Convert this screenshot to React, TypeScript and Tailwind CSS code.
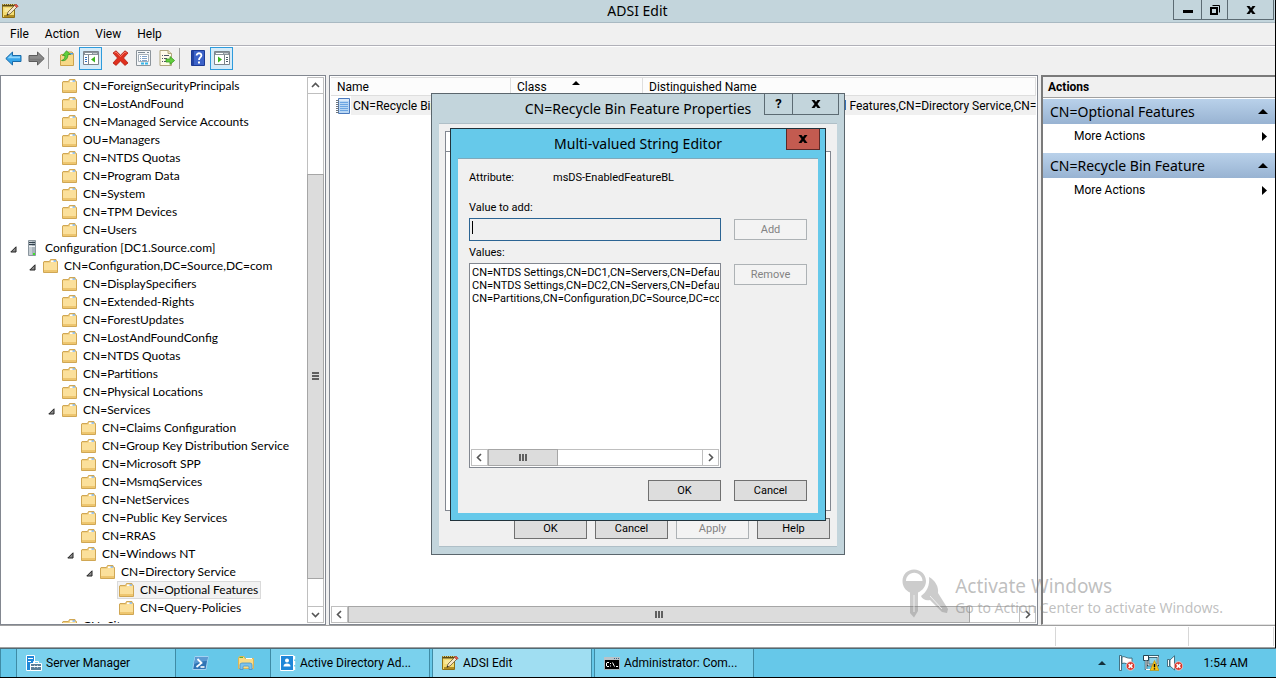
import React from 'react';

interface TreeNode {
  name: string;
  level: number;
  icon?: 'folder' | 'server';
  open?: boolean;
  selected?: boolean;
}

const TREE: TreeNode[] = [
  { name: 'CN=ForeignSecurityPrincipals', level: 2 },
  { name: 'CN=LostAndFound', level: 2 },
  { name: 'CN=Managed Service Accounts', level: 2 },
  { name: 'OU=Managers', level: 2 },
  { name: 'CN=NTDS Quotas', level: 2 },
  { name: 'CN=Program Data', level: 2 },
  { name: 'CN=System', level: 2 },
  { name: 'CN=TPM Devices', level: 2 },
  { name: 'CN=Users', level: 2 },
  { name: 'Configuration [DC1.Source.com]', level: 0, icon: 'server', open: true },
  { name: 'CN=Configuration,DC=Source,DC=com', level: 1, open: true },
  { name: 'CN=DisplaySpecifiers', level: 2 },
  { name: 'CN=Extended-Rights', level: 2 },
  { name: 'CN=ForestUpdates', level: 2 },
  { name: 'CN=LostAndFoundConfig', level: 2 },
  { name: 'CN=NTDS Quotas', level: 2 },
  { name: 'CN=Partitions', level: 2 },
  { name: 'CN=Physical Locations', level: 2 },
  { name: 'CN=Services', level: 2, open: true },
  { name: 'CN=Claims Configuration', level: 3 },
  { name: 'CN=Group Key Distribution Service', level: 3 },
  { name: 'CN=Microsoft SPP', level: 3 },
  { name: 'CN=MsmqServices', level: 3 },
  { name: 'CN=NetServices', level: 3 },
  { name: 'CN=Public Key Services', level: 3 },
  { name: 'CN=RRAS', level: 3 },
  { name: 'CN=Windows NT', level: 3, open: true },
  { name: 'CN=Directory Service', level: 4, open: true },
  { name: 'CN=Optional Features', level: 5, selected: true },
  { name: 'CN=Query-Policies', level: 5 },
  { name: 'CN=Sites', level: 2 },
];

const INDENT = ['pl-[4px]', 'pl-[23px]', 'pl-[42px]', 'pl-[61px]', 'pl-[80px]', 'pl-[99px]'];

const VALUES = [
  'CN=NTDS Settings,CN=DC1,CN=Servers,CN=Default-First-Site-Name',
  'CN=NTDS Settings,CN=DC2,CN=Servers,CN=Default-First-Site-Name',
  'CN=Partitions,CN=Configuration,DC=Source,DC=com',
];

/* ---------- icons ---------- */

const FolderIcon = () => (
  <svg width="15" height="14" viewBox="0 0 15 14" className="shrink-0">
    <path d="M0.5 3V13.5H14.5V2.5L13 1.5V0.5H7.5L6.5 2.5H1Z" fill="#f3d283" stroke="#d0a754" />
    <path d="M8 1.5H13V3H8Z" fill="#fff" />
    <path d="M10.5 1.5H13V2.5H10.5Z" fill="#3b8de0" />
    <path d="M1 4H7L8 3H14V12.5H1Z" fill="#fbe09b" />
    <path d="M1 11H14V13H1Z" fill="#eec66f" />
  </svg>
);

const ServerIcon = () => (
  <svg width="15" height="16" viewBox="0 0 15 16" className="shrink-0">
    <path d="M4.5 0.5H11.5V15.5H4.5Z" fill="#a9b4bc" stroke="#8b969e" />
    <path d="M5 1H8V15H5Z" fill="#c6ced4" />
    <path d="M5 2.5H11M5 4.5H11" stroke="#33424d" />
    <path d="M5 6.5H11" stroke="#eef2f4" />
    <path d="M9 13H11V15H9Z" fill="#3fe22b" />
  </svg>
);

const Expander = () => (
  <svg width="7" height="7" viewBox="0 0 7 7">
    <path d="M6 0.8V6H0.8Z" fill="#8a8a8a" stroke="#222" strokeWidth="1" />
  </svg>
);

const NotepadIcon = () => (
  <svg width="17" height="16" viewBox="0 0 17 16" className="shrink-0">
    <path d="M0.5 1.5H12.5V14.5H0.5Z" fill="#f3dc72" stroke="#8d6f14" />
    <path d="M0.5 1.5H12.5V3.5H0.5Z" fill="#5b4a14" />
    <path d="M1 1.5H12" stroke="#d9c878" strokeDasharray="1 1" />
    <path d="M2 12H12V14H2Z" fill="#b38f23" />
    <path d="M2.5 6H9M2.5 8H7" stroke="#fff6c4" />
    <path d="M5 12L6 9L13 2L15 4L8 11Z" fill="#f6e7c8" stroke="#6b5a33" strokeWidth="0.8" />
    <path d="M12.5 2.5L14 1L16.2 3.2L14.8 4.6Z" fill="#e2574a" stroke="#a43429" strokeWidth="0.6" />
    <path d="M4.6 12.6L5.4 10.8L6.6 12Z" fill="#222" />
  </svg>
);

const ArrowIcon = ({ flip = false }: { flip?: boolean }) => (
  <svg width="17" height="15" viewBox="0 0 17 15" className={flip ? 'rotate-180' : ''}>
    <path
      d="M0.8 7.5L7.5 1V4.5H16V10.5H7.5V14Z"
      fill={flip ? '#8b8b8b' : '#35a5ea'}
      stroke={flip ? '#5c5c5c' : '#1b6aa8'}
    />
    <path d="M2.5 7.2L6.6 3.2V5.6H15V7.2Z" fill={flip ? '#7a7a7a' : '#8fd4fa'} />
  </svg>
);

const FolderUpIcon = () => (
  <svg width="16" height="16" viewBox="0 0 16 16">
    <path d="M1.5 5V15.5H14.5V3.5L13 2H8.5L7.5 4.5H2Z" fill="#f7d888" stroke="#cda24d" />
    <path d="M11 3H14V4.5H11Z" fill="#4b9be6" />
    <path d="M2.5 10.5C5 10 6 8 6 5.5H3.5L7.5 0.8L11.5 4.5H9C9 8.5 6.5 11.5 2.5 10.5Z" fill="#5fd03c" stroke="#2f8f1d" strokeWidth="0.7" />
  </svg>
);

const PaneIcon = ({ right = false }: { right?: boolean }) => (
  <svg width="16" height="14" viewBox="0 0 16 14">
    <path d="M0.5 0.5H15.5V13.5H0.5Z" fill="#fff" stroke="#7d858c" />
    <path d="M1 1H15V4H1Z" fill="#8a939b" />
    <path d="M2 2.5H9" stroke="#fff" />
    <path d="M10.5 2.5H11.5M12.5 2.5H13.5" stroke="#fff" />
    {right ? (
      <>
        <path d="M10.5 4V13" stroke="#7d858c" />
        <path d="M12 6.5H14M12 8.5H14M12 10.5H14" stroke="#4a5a68" />
        <path d="M4 5.5L8 8.5L4 11.5Z" fill="#3db51d" />
      </>
    ) : (
      <>
        <path d="M5.5 4V13" stroke="#7d858c" />
        <path d="M2 6.5H4M2 8.5H4M2 10.5H4" stroke="#2f6fc0" />
        <path d="M12 5.5L8 8.5L12 11.5Z" fill="#3db51d" />
      </>
    )}
  </svg>
);

const DeleteIcon = () => (
  <svg width="17" height="16" viewBox="0 0 17 16">
    <path
      d="M1 3L4 0.8L8.5 5.2L13 0.8L16 3L11.5 8L16 13L13 15.4L8.5 11L4 15.4L1 13L5.5 8Z"
      fill="#e0301e"
      stroke="#b01e12"
      strokeWidth="0.8"
    />
    <path d="M2.5 3L4 2L8.5 6.6L13 2L14.5 3" fill="none" stroke="#f47c6e" />
  </svg>
);

const PropertiesIcon = () => (
  <svg width="15" height="16" viewBox="0 0 15 16">
    <path d="M0.5 0.5H14.5V15.5H0.5Z" fill="#f4f6f8" stroke="#8c949b" />
    <path d="M2 2.5H9M11 2.5H13" stroke="#7c8994" />
    <path d="M2.5 4.5H12.5V11.5H2.5Z" fill="#fff" stroke="#a5afb8" />
    <path d="M4 6.5H5M6 6.5H11M4 8.5H5M6 8.5H11M4 10.5H5M6 10.5H11" stroke="#7fa3cb" />
    <path d="M5 13.5H8M9 13.5H12" stroke="#34b6ea" strokeWidth="2" />
  </svg>
);

const ExportIcon = () => (
  <svg width="16" height="16" viewBox="0 0 16 16">
    <path d="M1 0.5H9L12.5 3.5V15.5H1Z" fill="#fffbe9" stroke="#b0a67e" />
    <path d="M9 0.5V3.5H12.5" fill="#e9dfbb" stroke="#b0a67e" />
    <path d="M3 5.5H4M5 5.5H10M3 8.5H4M5 8.5H8M3 11.5H4M5 11.5H8" stroke="#4d5566" />
    <path d="M7 9H11V6.5L15.6 10.5L11 14.5V12H7Z" fill="#62cf3e" stroke="#3b9a22" strokeWidth="0.8" />
  </svg>
);

const HelpIcon = () => (
  <svg width="14" height="16" viewBox="0 0 14 16">
    <path d="M0.5 0.5H13.5V15.5H0.5Z" fill="#3c62c8" stroke="#1d3a94" />
    <path d="M1 1H3V15H1Z" fill="#2343a3" />
    <path d="M5.6 5.6C5.6 2.4 10.4 2.6 10.4 5.4C10.4 7.4 8 7.4 8 10" fill="none" stroke="#fff" strokeWidth="1.8" />
    <path d="M7 11.4H9V13.4H7Z" fill="#fff" />
  </svg>
);

const BookIcon = () => (
  <svg width="14" height="16" viewBox="0 0 14 16" className="shrink-0">
    <path d="M2.5 0.5H13.5V15.5H2.5Z" fill="#b9d7f4" stroke="#4a79bd" />
    <path d="M3 1H13V3H3Z" fill="#dbeafa" />
    <path d="M4 4.5H12M4 6.5H12M4 8.5H12M4 10.5H12M4 12.5H12" stroke="#6ba5e2" />
    <path d="M0 2.5H3M0 4.5H3M0 6.5H3M0 8.5H3M0 10.5H3M0 12.5H3M0 14.5H3" stroke="#6d7680" />
  </svg>
);

const Chevron = ({ dir }: { dir: 'up' | 'down' | 'left' | 'right' }) => {
  const d = {
    up: 'M1 6L4.5 2.5L8 6',
    down: 'M1 3L4.5 6.5L8 3',
    left: 'M6 1L2.5 4.5L6 8',
    right: 'M3 1L6.5 4.5L3 8',
  }[dir];
  return (
    <svg width="9" height="9" viewBox="0 0 9 9">
      <path d={d} fill="none" stroke="#555" strokeWidth="1.6" />
    </svg>
  );
};

const CloseGlyph = () => (
  <svg width="10" height="8" viewBox="0 0 10 8">
    <path d="M0.5 0H3.5L5 2L6.5 0H9.5L6.5 4L9.5 8H6.5L5 6L3.5 8H0.5L3.5 4Z" fill="#000" />
  </svg>
);

/* ---------- shared controls ---------- */

const arrowBtn = 'flex items-center justify-center shrink-0 bg-white border border-[#bfbfbf]';

const HScroll = ({ thumb, rest }: { thumb: string; rest: string }) => (
  <div className="flex h-[17px] shrink-0 bg-white">
    <button className={`${arrowBtn} w-[17px]`} aria-label="Scroll left"><Chevron dir="left" /></button>
    <div className={`${thumb} flex items-center justify-center gap-px bg-[#dcdcdc] border border-[#a6a6a6]`}>
      <span className="w-[2px] h-[7px] bg-[#606060]" />
      <span className="w-[2px] h-[7px] bg-[#606060]" />
      <span className="w-[2px] h-[7px] bg-[#606060]" />
    </div>
    <div className={`${rest} border-y border-[#bfbfbf]`} />
    <button className={`${arrowBtn} w-[17px]`} aria-label="Scroll right"><Chevron dir="right" /></button>
  </div>
);

const DialogButton = ({ label, disabled }: { label: string; disabled?: boolean }) => (
  <button
    disabled={disabled}
    className="w-[73px] h-[21px] text-center bg-[#dddddd] border border-[#707070] text-black disabled:bg-[#f3f3f3] disabled:border-[#adb2b5] disabled:text-[#838383]"
  >
    {label}
  </button>
);

/* ---------- window parts ---------- */

const TitleBar = () => (
  <header className="relative flex h-[23px] shrink-0 items-center justify-center bg-[#c3d5dc] border-b border-[#a9b9c2]">
    <div className="absolute left-[2px] top-[3px]"><NotepadIcon /></div>
    <h1 className="font-['Noto_Sans',sans-serif] text-[14px]">ADSI Edit</h1>
    <div className="absolute right-px top-0 flex h-[20px] border-x border-b border-[#5c6b73] divide-x divide-[#5c6b73]">
      <button className="flex w-[28px] items-center justify-center" aria-label="Minimize">
        <span className="mt-1 h-[3px] w-[10px] bg-black" />
      </button>
      <button className="flex w-[26px] items-center justify-center" aria-label="Restore">
        <svg width="10" height="10" viewBox="0 0 10 10">
          <path d="M1 3H7V9H1Z" fill="none" stroke="#000" strokeWidth="2" />
          <path d="M2.5 0.5H9.5V7.5" fill="none" stroke="#000" />
        </svg>
      </button>
      <button className="flex w-[45px] items-center justify-center" aria-label="Close"><CloseGlyph /></button>
    </div>
  </header>
);

const MenuBar = () => (
  <nav className="flex h-[23px] shrink-0 items-center gap-4 px-[10px] border-b border-[#b0b0b8]">
    {['File', 'Action', 'View', 'Help'].map((item) => (
      <button key={item}>{item}</button>
    ))}
  </nav>
);

const toggled = 'flex h-[23px] w-[23px] items-center justify-center bg-[#d6ebf8] border border-[#2e9bdc]';

const Toolbar = () => (
  <div className="flex h-[29px] shrink-0 items-center px-[5px] pb-[6px] border-t border-white">
    <button aria-label="Back"><ArrowIcon /></button>
    <button className="ml-[6px]" aria-label="Forward"><ArrowIcon flip /></button>
    <span className="ml-[3px] mr-[10px] h-[21px] w-px bg-[#a0a0a0]" />
    <button aria-label="Up one level"><FolderUpIcon /></button>
    <button className={`${toggled} ml-[4px]`} aria-label="Show console tree"><PaneIcon /></button>
    <button className="ml-[10px]" aria-label="Delete"><DeleteIcon /></button>
    <button className="ml-[7px]" aria-label="Properties"><PropertiesIcon /></button>
    <button className="ml-[8px]" aria-label="Export list"><ExportIcon /></button>
    <span className="ml-[4px] mr-[11px] h-[21px] w-px bg-[#a0a0a0]" />
    <button aria-label="Help"><HelpIcon /></button>
    <button className={`${toggled} ml-[5px]`} aria-label="Show action pane"><PaneIcon right /></button>
  </div>
);

const TreePane = () => (
  <section className="flex w-[326px] shrink-0 border border-[#828790] bg-white p-px font-['Lato',sans-serif]">
    <ul className="min-w-0 flex-1 overflow-hidden">
      {TREE.map((node, i) => (
        <li key={i} className={`flex h-[18px] items-center ${INDENT[node.level]}`}>
          <span className="w-[16px] shrink-0 pl-[4px] pt-[2px]">{node.open && <Expander />}</span>
          <span
            className={`flex h-[18px] items-center gap-[6px] whitespace-nowrap border pl-px pr-[2px] ${
              node.selected ? 'border-[#dadada] bg-[#f2f2f2]' : 'border-transparent'
            }`}
          >
            {node.icon === 'server' ? <ServerIcon /> : <FolderIcon />}
            {node.name}
          </span>
        </li>
      ))}
    </ul>
    <div className="flex w-[17px] shrink-0 flex-col">
      <button className={`${arrowBtn} h-[17px]`} aria-label="Scroll up"><Chevron dir="up" /></button>
      <div className="grow-[82] border-x border-[#bfbfbf]" />
      <div className="flex grow-[404] flex-col items-center justify-center gap-px border border-[#a6a6a6] bg-[#dcdcdc]">
        <span className="h-[2px] w-[7px] bg-[#606060]" />
        <span className="h-[2px] w-[7px] bg-[#606060]" />
        <span className="h-[2px] w-[7px] bg-[#606060]" />
      </div>
      <div className="grow-[28] border-x border-[#bfbfbf]" />
      <button className={`${arrowBtn} h-[17px]`} aria-label="Scroll down"><Chevron dir="down" /></button>
    </div>
  </section>
);

const th = 'relative h-[19px] pl-[6px] text-left font-normal border-r border-y border-[#dedede] bg-[#fcfcfc]';

const ListPane = () => (
  <section className="flex min-w-0 flex-1 flex-col border border-[#828790] bg-white p-px">
    <div className="min-h-0 flex-1 overflow-hidden">
      <table className="w-full table-fixed border-separate border-spacing-0">
        <thead>
          <tr>
            <th className={`${th} w-[180px]`}>Name</th>
            <th className={`${th} w-[132px]`}>
              Class
              <svg className="absolute left-[61px] top-[3px]" width="8" height="4" viewBox="0 0 8 4">
                <path d="M0 4L4 0L8 4Z" fill="#000" />
              </svg>
            </th>
            <th className={th}>Distinguished Name</th>
          </tr>
        </thead>
        <tbody>
          <tr className="bg-[#f0f0f0]">
            <td className="overflow-hidden p-0">
              <div className="flex h-[19px] items-center gap-[3px] whitespace-nowrap bg-linear-to-r from-white from-[20px] to-[#f0f0f0] to-[20px] pl-[5px]">
                <BookIcon />
                CN=Recycle Bin Feature
              </div>
            </td>
            <td className="overflow-hidden p-0 pl-[6px] whitespace-nowrap">msDS-OptionalFeature</td>
            <td className="overflow-hidden p-0 pl-[6px] whitespace-nowrap">
              CN=Recycle Bin Feature,CN=Optional Features,CN=Directory Service,CN=Windows NT,CN=Services
            </td>
          </tr>
        </tbody>
      </table>
    </div>
    <HScroll thumb="grow-[621]" rest="grow-[50]" />
  </section>
);

const ActionGroup = ({ title }: { title: string }) => (
  <div className="mb-[5px]">
    <button className="flex h-[25px] w-full items-center justify-between bg-linear-to-b from-[#b9d1ea] to-[#98b3d2] pl-[7px] pr-[7px] text-left font-['Noto_Sans',sans-serif] text-[14px]">
      {title}
      <svg width="10" height="5" viewBox="0 0 10 5"><path d="M0 5L5 0L10 5Z" fill="#000" /></svg>
    </button>
    <button className="flex h-[24px] w-full items-center justify-between pl-[31px] pr-[8px] text-left">
      More Actions
      <svg width="5" height="9" viewBox="0 0 5 9"><path d="M0 0L5 4.5L0 9Z" fill="#000" /></svg>
    </button>
  </div>
);

const ActionsPane = () => (
  <aside className="w-[234px] shrink-0 border-t-2 border-l-2 border-b border-[#7a7a7a] border-b-[#e3e3e3] bg-white">
    <h2 className="mb-px h-[21px] border-b border-[#a0a0a0] bg-[#f0f0f0] pl-[5px] leading-[21px] font-bold">Actions</h2>
    <ActionGroup title="CN=Optional Features" />
    <ActionGroup title="CN=Recycle Bin Feature" />
  </aside>
);

/* ---------- dialogs ---------- */

const PropertiesDialog = () => (
  <div
    role="dialog"
    aria-label="CN=Recycle Bin Feature Properties"
    className="absolute left-[431px] top-[93px] flex h-[462px] w-[414px] flex-col border border-[#5b666d] bg-[#c3d5dc] px-[7px] pb-[7px]"
  >
    <div className="relative flex h-[29px] shrink-0 items-center justify-center">
      <h2 className="font-['Noto_Sans',sans-serif] text-[14px]">CN=Recycle Bin Feature Properties</h2>
      <div className="absolute -right-[2px] top-0 flex h-[21px] border-x border-b border-[#5c6b73] divide-x divide-[#5c6b73]">
        <button className="flex w-[28px] items-center justify-center text-[13px] font-bold" aria-label="Help">?</button>
        <button className="flex w-[45px] items-center justify-center" aria-label="Close"><CloseGlyph /></button>
      </div>
    </div>
    <div className="flex flex-1 flex-col border-y border-[#afbfc7] bg-[#f0f0f0] px-[6px] pb-[7px] pt-[7px] font-['Roboto',sans-serif] text-[11px]">
      <div className="h-[20px] w-[98px] border-x border-t border-[#828790] bg-white" />
      <div className="flex-1 border border-[#828790] bg-white" />
      <div className="mt-[7px] flex justify-end gap-2 pr-px">
        <DialogButton label="OK" />
        <DialogButton label="Cancel" />
        <DialogButton label="Apply" disabled />
        <DialogButton label="Help" />
      </div>
    </div>
  </div>
);

const StringEditorDialog = () => (
  <div
    role="dialog"
    aria-label="Multi-valued String Editor"
    className="absolute left-[450px] top-[128px] w-[376px] border border-[#22333c] bg-[#66c9ea] px-[7px] pb-[7px]"
  >
    <div className="relative flex h-[29px] items-center justify-center">
      <h2 className="font-['Noto_Sans',sans-serif] text-[14px]">Multi-valued String Editor</h2>
      <button
        className="absolute -right-[2px] top-0 flex h-[21px] w-[34px] items-center justify-center border-x border-b border-[#5a2a28] bg-[#c35b50]"
        aria-label="Close"
      >
        <CloseGlyph />
      </button>
    </div>
    <div className="border-t border-[#7fa9bb] bg-[#f0f0f0] px-[11px] pb-[12px] pt-[12px] font-['Roboto',sans-serif] text-[11px] leading-[13px]">
      <div className="flex">
        <span className="w-[84px]">Attribute:</span>
        <span>msDS-EnabledFeatureBL</span>
      </div>
      <label htmlFor="value-to-add" className="mt-[17px] mb-[4px] block">Value to add:</label>
      <div className="flex items-center gap-[13px]">
        <div className="relative flex-1">
          <input id="value-to-add" className="block h-[23px] w-full border border-[#2b6493] bg-[#f0f0f0] px-[3px] outline-none" />
          <span className="absolute left-[3px] top-[3px] h-[13px] w-px bg-black" />
        </div>
        <DialogButton label="Add" disabled />
      </div>
      <div className="mt-[5px] mb-[4px]">Values:</div>
      <div className="flex items-start gap-[13px]">
        <div className="flex h-[205px] min-w-0 flex-1 flex-col border border-[#828790] bg-white p-px">
          <ul className="flex-1 overflow-hidden pl-px pt-px">
            {VALUES.map((value) => (
              <li key={value} className="whitespace-nowrap">{value}</li>
            ))}
          </ul>
          <HScroll thumb="w-[70px]" rest="flex-1" />
        </div>
        <div className="pt-px"><DialogButton label="Remove" disabled /></div>
      </div>
      <div className="mt-[12px] flex justify-end gap-[13px]">
        <DialogButton label="OK" />
        <DialogButton label="Cancel" />
      </div>
    </div>
  </div>
);

/* ---------- bottom ---------- */

const StatusBar = () => (
  <footer className="flex h-[23px] shrink-0 justify-end border-y border-[#a0a0a0] bg-white py-px">
    <span className="w-[133px] border-l border-[#d7d7d7]" />
    <span className="mr-px w-[86px] border-x border-[#d7d7d7]" />
  </footer>
);

const ServerManagerIcon = () => (
  <svg width="16" height="16" viewBox="0 0 16 16" className="shrink-0">
    <path d="M0.5 0.5H8.5V15.5H0.5Z" fill="#1f87d8" stroke="#fff" />
    <path d="M2 3.5H7M2 6.5H5" stroke="#fff" />
    <path d="M4.5 8.5H15.5V15.5H4.5Z" fill="#5b7f98" stroke="#fff" />
    <path d="M7.5 8V6.5H12.5V8" fill="none" stroke="#fff" />
    <path d="M5 11.5H15M8.5 10.5V12.5M11.5 10.5V12.5" stroke="#fff" />
  </svg>
);

const PowerShellIcon = () => (
  <svg width="17" height="14" viewBox="0 0 17 14">
    <path d="M3 0.5H16.3L14 13.5H0.7Z" fill="#2f74b5" stroke="#a4d2f2" />
    <path d="M3.4 1H15.7L15 5C10 5 6 7 2 8Z" fill="#5c9bd3" />
    <path d="M5.5 3L9.5 7L4.5 11" fill="none" stroke="#fff" strokeWidth="1.8" />
    <path d="M8.5 11H12.5" stroke="#fff" strokeWidth="1.6" />
  </svg>
);

const ExplorerIcon = () => (
  <svg width="16" height="14" viewBox="0 0 16 14">
    <path d="M0.5 2V12.5H15.5V2.5H7L6 0.5H1.5Z" fill="#f9dc86" stroke="#dcb455" />
    <path d="M1.5 1.5H5" stroke="#53b53b" />
    <path d="M8 2.5H14" stroke="#fff" />
    <path d="M2 13.5V9Q2 7 4 7H12Q14 7 14 9V13.5H11V11Q11 10 10 10H6Q5 10 5 11V13.5Z" fill="#7cc3ee" stroke="#4794c9" strokeWidth="0.8" />
  </svg>
);

const ContactsIcon = () => (
  <svg width="16" height="16" viewBox="0 0 16 16" className="shrink-0">
    <path d="M0.5 0.5H13.5V15.5H0.5Z" fill="#1f87d8" stroke="#fff" />
    <circle cx="7" cy="5.5" r="2" fill="#fff" />
    <path d="M3.5 11.5Q3.5 8.5 7 8.5Q10.5 8.5 10.5 11.5Z" fill="#fff" />
    <path d="M14.5 1V4.5M14.5 6V10M14.5 11.5V15" stroke="#fff" strokeWidth="1.4" />
  </svg>
);

const ConsoleIcon = () => (
  <svg width="16" height="13" viewBox="0 0 16 13" className="shrink-0">
    <path d="M0.5 0.5H15.5V12.5H0.5Z" fill="#000" stroke="#a9b4ba" />
    <path d="M0 0H16V3H0Z" fill="#b9c3c9" />
    <path d="M10 1.5H11M12 1.5H13M14 1.5H15" stroke="#3d5f7c" />
    <path d="M5 5.5H3L2.5 6V9L3 9.5H5M6.5 6V7M6.5 8.5V9.5M8.5 5.5L10.5 9.5M12 9.5H14" fill="none" stroke="#fff" />
  </svg>
);

const ErrorBadge = () => (
  <>
    <circle cx="11.5" cy="11" r="4.3" fill="#d8352a" stroke="#f6d4d0" strokeWidth="0.8" />
    <path d="M9.6 9.1L13.4 12.9M13.4 9.1L9.6 12.9" stroke="#fff" strokeWidth="1.5" />
  </>
);

const Tray = () => (
  <div className="ml-auto flex items-center pr-[28px]">
    <button className="mr-[13px]" aria-label="Show hidden icons">
      <svg width="8" height="4" viewBox="0 0 8 4"><path d="M0 4L4 0L8 4Z" fill="#14303c" /></svg>
    </button>
    <div className="mr-[21px] flex gap-2">
      <svg width="16" height="16" viewBox="0 0 16 16">
        <path d="M0.5 0.5H2.5V15.5H0.5Z" fill="#fff" stroke="#2c5566" strokeWidth="0.8" />
        <path d="M3 2C6 0.5 7 4 13 3V9C8 10 6 7 3 8.5Z" fill="#fff" stroke="#2c5566" strokeWidth="0.8" />
        <ErrorBadge />
      </svg>
      <svg width="16" height="16" viewBox="0 0 16 16">
        <path d="M5 1.5H15V10H5Z" fill="#8fd3ea" stroke="#24424f" strokeWidth="2.4" />
        <path d="M5 1.5H15V10H5Z" fill="none" stroke="#fff" />
        <path d="M0.5 0.5H5.5V5.5H0.5Z" fill="#fff" stroke="#24424f" />
        <path d="M3 5.5V15" stroke="#24424f" strokeWidth="2.4" />
        <path d="M3 5.5V14.5H7" stroke="#fff" fill="none" />
        <path d="M11.5 5.5L16 15.5H7Z" fill="#fbc618" stroke="#b98a08" strokeWidth="0.6" />
        <path d="M11.5 9V12.2M11.5 13.2V14.6" stroke="#000" strokeWidth="1.4" />
      </svg>
      <svg width="16" height="16" viewBox="0 0 16 16">
        <path d="M0.5 4.5H2.5V11.5H0.5Z" fill="#fff" stroke="#2c5566" strokeWidth="0.8" />
        <path d="M3 5L7.5 0.8V15L3 11Z" fill="#fff" stroke="#2c5566" strokeWidth="0.8" />
        <ErrorBadge />
      </svg>
    </div>
    <time>1:54 AM</time>
  </div>
);

const task = 'flex w-[160px] items-center gap-[4px] border-x border-[#3f8ba5] pl-[9px] text-left';

const Taskbar = () => (
  <div className="flex h-[30px] shrink-0 border-t border-b border-t-[#4f6a74] border-b-black bg-[#66c8e9]">
    <span className="w-[16px] border-l border-[#3f8ba5]" />
    <button className={`${task} bg-[#7ad1ed]`}><ServerManagerIcon />Server Manager</button>
    <div className="flex w-[94px] items-center justify-between px-[16px]">
      <button aria-label="Windows PowerShell"><PowerShellIcon /></button>
      <button aria-label="File Explorer"><ExplorerIcon /></button>
    </div>
    <div className="flex gap-[2px]">
      <button className={`${task} bg-[#7ad1ed]`}><ContactsIcon />Active Directory Ad...</button>
      <button className={`${task} bg-[#a0def2]`}><NotepadIcon />ADSI Edit</button>
      <button className={`${task} bg-[#7ad1ed]`}><ConsoleIcon />Administrator: Com...</button>
    </div>
    <Tray />
  </div>
);

const Watermark = () => (
  <div className="pointer-events-none absolute bottom-[59px] right-[53px] flex gap-[7px] font-['Noto_Sans',sans-serif] text-[#808080]/50">
    <svg width="46" height="50" viewBox="0 0 46 50" className="text-[#808080]/40">
      <path
        fillRule="evenodd"
        d="M12 0.5C18.6 0.5 24 5.6 24 12C24 17.4 20.5 21.5 16 23.5V42L12 48.5L8 44V23.5C3.5 21.5 0.5 17.4 0.5 12C0.5 5.6 5.4 0.5 12 0.5ZM4 12H20.5C20.5 7.5 17 3.8 12.2 3.8C7.5 3.8 4 7.5 4 12Z"
        fill="currentColor"
      />
      <path
        d="M27 8C33 11 37 18 36 24L46 40L45 44L40 43L28 31C24 32 20 30 19 27C25 23 28 16 27 8Z"
        fill="currentColor"
      />
      <path d="M28 27L40 40M12 26V43" stroke="#fff" strokeOpacity="0.7" />
    </svg>
    <div className="pt-[5px]">
      <p className="text-[19px] leading-[24px]">Activate Windows</p>
      <p className="text-[14px] leading-[20px]">Go to Action Center to activate Windows.</p>
    </div>
  </div>
);

export default function App() {
  return (
    <div className="relative flex h-screen flex-col overflow-hidden bg-[#f0f0f0] font-['Roboto',sans-serif] text-[12px] leading-[16px] text-black">
      <div className="flex min-h-0 flex-1 flex-col border-r border-black">
        <TitleBar />
        <MenuBar />
        <Toolbar />
        <main className="flex min-h-0 flex-1 gap-[3px]">
          <TreePane />
          <ListPane />
          <ActionsPane />
        </main>
        <StatusBar />
      </div>
      <Taskbar />
      <PropertiesDialog />
      <StringEditorDialog />
      <Watermark />
    </div>
  );
}
